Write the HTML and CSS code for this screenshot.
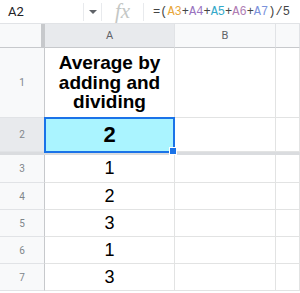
FILE: index.html
```html
<!DOCTYPE html>
<html lang="en">
<head>
  <meta charset="UTF-8" />
  <title>Average by adding and dividing</title>
  <link rel="stylesheet" href="styles.css">
</head>
<body>
  <div class="formula-bar">
    <div class="name-box">A2</div>
    <div class="name-drop"><span class="caret"></span></div>
    <div class="fx">fx</div>
    <div class="formula">=(<span class="r1">A3</span>+<span class="r2">A4</span>+<span class="r3">A5</span>+<span class="r4">A6</span>+<span class="r5">A7</span>)/5</div>
  </div>

  <div class="sheet">
    <!-- column headers -->
    <div class="corner"></div>
    <div class="col-head active">A</div>
    <div class="col-head">B</div>
    <div class="col-head"></div>

    <!-- row 1 -->
    <div class="row-head">1</div>
    <div class="cell title">Average by adding and dividing</div>
    <div class="cell"></div>
    <div class="cell"></div>

    <!-- row 2 (selected) -->
    <div class="row-head active">2</div>
    <div class="cell result selected">2</div>
    <div class="cell"></div>
    <div class="cell"></div>

    <!-- frozen divider -->
    <div class="freeze"></div>

    <div class="row-head">3</div>
    <div class="cell num">1</div>
    <div class="cell"></div>
    <div class="cell"></div>

    <div class="row-head">4</div>
    <div class="cell num">2</div>
    <div class="cell"></div>
    <div class="cell"></div>

    <div class="row-head">5</div>
    <div class="cell num">3</div>
    <div class="cell"></div>
    <div class="cell"></div>

    <div class="row-head">6</div>
    <div class="cell num">1</div>
    <div class="cell"></div>
    <div class="cell"></div>

    <div class="row-head">7</div>
    <div class="cell num">3</div>
    <div class="cell"></div>
    <div class="cell"></div>
  </div>
</body>
</html>
```

FILE: styles.css
```css
/* Reset */
* {
  box-sizing: border-box;
}

body, html {
  margin: 0;
  background: #fff;
  font-family: Arial, "Liberation Sans", sans-serif;
  overflow: hidden;
}

/* Formula bar */
.formula-bar {
  display: flex;
  align-items: center;
  height: 24px;
  border-bottom: 1px solid #e1e3e6;
  font-family: Roboto, Arial, sans-serif;
}

.name-box {
  width: 84px;
  height: 18px;
  padding-left: 8px;
  border-right: 1px solid #e8eaed;
  font-size: 13px;
  line-height: 18px;
  color: #202124;
}

.name-drop {
  width: 18px;
  height: 18px;
  border-right: 1px solid #e8eaed;
  display: flex;
  justify-content: center;
  align-items: center;
}

.caret {
  width: 0;
  height: 0;
  border-left: 4px solid transparent;
  border-right: 4px solid transparent;
  border-top: 4px solid #5f6368;
}

.fx {
  width: 42px;
  height: 18px;
  padding-left: 13px;
  border-right: 1px solid #e8eaed;
  font-family: "Liberation Serif", serif;
  font-style: italic;
  font-size: 21px;
  line-height: 17px;
  color: #c4c7c5;
}

.formula {
  padding-left: 9px;
  font-family: "Liberation Mono", monospace;
  font-size: 12px;
  color: #444;
}

.r1 { color: #e8a63a; }
.r2 { color: #9a73c0; }
.r3 { color: #34a9c9; }
.r4 { color: #b07db3; }
.r5 { color: #7b92dc; }

/* Grid */
.sheet {
  display: grid;
  grid-template-columns: 45px 130px 101px 1fr;
  grid-template-rows: 24px 70px 34px 3px 28px 27px 27px 27px 27px;
}

.corner {
  background: #f8f9fa;
  border-right: 4px solid #c7c9cc;
  border-bottom: 1px solid #c7c9cc;
}

.col-head {
  background: #f8f9fa;
  border-right: 1px solid #e1e3e6;
  border-bottom: 1px solid #c7c9cc;
  font-family: Roboto, Arial, sans-serif;
  font-size: 11px;
  color: #5f6368;
  display: flex;
  justify-content: center;
  align-items: center;
}

.row-head {
  background: #f8f9fa;
  border-right: 1px solid #c7c9cc;
  border-bottom: 1px solid #e1e3e6;
  font-family: Roboto, Arial, sans-serif;
  font-size: 10px;
  color: #80868b;
  display: flex;
  justify-content: center;
  align-items: center;
}

.col-head.active,
.row-head.active {
  background: #e8eaed;
}

.cell {
  border-right: 1px solid #e2e3e3;
  border-bottom: 1px solid #e2e3e3;
  display: flex;
  justify-content: center;
  align-items: center;
  text-align: center;
  color: #000;
}

.title {
  padding: 0 8px;
  font-weight: bold;
  font-size: 19px;
  line-height: 19.5px;
}

.result {
  font-weight: bold;
  font-size: 22px;
}

.num {
  font-size: 18px;
}

.selected {
  position: relative;
  background: #aaf4ff;
  border: 2px solid #1a73e8;
  margin: -1px 0 -1px -1px;
  z-index: 1;
}

/* fill handle */
.selected::after {
  content: "";
  position: absolute;
  right: -4px;
  bottom: -4px;
  width: 6px;
  height: 6px;
  background: #1a73e8;
  border: 1px solid #fff;
}

.freeze {
  grid-column: 1 / -1;
  background: #dadcdf;
}
```
